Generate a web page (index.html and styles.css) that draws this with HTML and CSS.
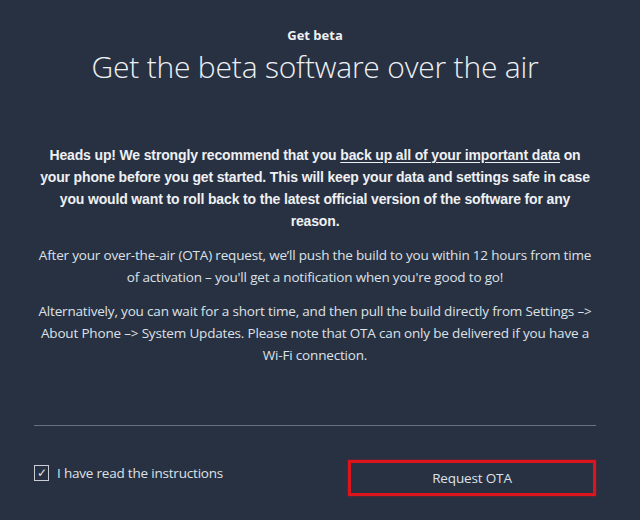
FILE: index.html
```html
<!DOCTYPE html>
<html>
<head>
<meta charset="utf-8">
<link rel="stylesheet" href="styles.css">
</head>
<body>
<div class="page">
  <div class="eyebrow">Get beta</div>
  <h1 class="title">Get the beta software over the air</h1>
  <p class="warn">Heads up! We strongly recommend that you <u>back up all of your important data</u> on your phone before you get started. This will keep your data and settings safe in case you would want to roll back to the latest official version of the software for any reason.</p>
  <p class="text">After your over-the-air (OTA) request, we’ll push the build to you within 12 hours from time of activation – you'll get a notification when you're good to go!</p>
  <p class="text">Alternatively, you can wait for a short time, and then pull the build directly from Settings –&gt; About Phone –&gt; System Updates. Please note that OTA can only be delivered if you have a Wi-Fi connection.</p>
  <div class="rule"></div>
  <div class="actions">
    <label class="check">
      <span class="box">✓</span>
      <span>I have read the instructions</span>
    </label>
    <button class="btn">Request OTA</button>
  </div>
</div>
</body>
</html>
```
FILE: styles.css
```css
html, body {
  margin: 0;
  padding: 0;
  background: #283142;
  height: 100%;
}
.page {
  width: 562px;
  margin-left: 34px;
  padding-top: 27px;
  color: #eef0f3;
  font-family: "Open Sans", "Noto Sans", sans-serif;
  text-align: center;
}
.eyebrow {
  font-size: 13px;
  font-weight: 700;
  line-height: 16px;
}
.title {
  margin: 4px 0 0;
  font-size: 30px;
  font-weight: 300;
  line-height: 40px;
  letter-spacing: -0.2px;
}
.warn {
  margin: 57px 0 0;
  font-family: "Liberation Sans", Arial, sans-serif;
  font-weight: 700;
  font-size: 14px;
  line-height: 22px;
  letter-spacing: -0.15px;
}
.warn u {
  text-underline-offset: 2px;
}
.text {
  margin: 12px 0 0;
  font-size: 13.5px;
  line-height: 22px;
  font-weight: 400;
  letter-spacing: -0.18px;
  color: #dde1e7;
}
.rule {
  margin-top: 59px;
  height: 1px;
  background: #6a7282;
}
.actions {
  display: flex;
  justify-content: space-between;
  align-items: flex-start;
  margin-top: 34px;
}
.check {
  display: flex;
  align-items: center;
  gap: 8px;
  margin-top: 4px;
  font-size: 13.5px;
  letter-spacing: -0.2px;
  color: #dde1e7;
}
.box {
  width: 13px;
  height: 14px;
  border: 1px solid #c9ced6;
  display: flex;
  align-items: center;
  justify-content: center;
  font-size: 12px;
  line-height: 1;
  letter-spacing: 0;
}
.btn {
  width: 248px;
  height: 36px;
  background: transparent;
  border: 3px solid #dc141c;
  box-shadow: 0 0 2px rgba(220, 20, 28, 0.6);
  color: #dde1e7;
  font-family: "Open Sans", "Noto Sans", sans-serif;
  font-size: 13.5px;
  letter-spacing: -0.15px;
}
```
